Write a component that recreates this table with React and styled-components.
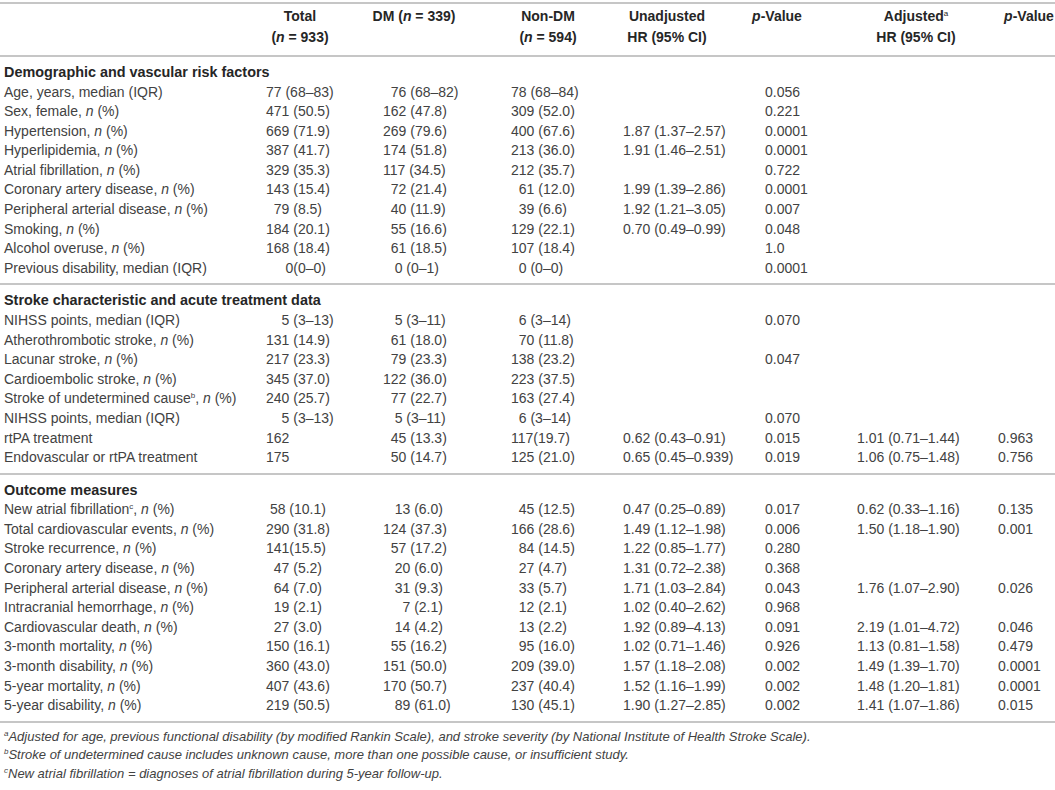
import React from "react";
import styled, { createGlobalStyle } from "styled-components";

const GlobalStyle = createGlobalStyle`
  html, body {
    margin: 0;
    padding: 0;
    background: #fff;
    overflow: hidden;
  }
  body {
    font-family: "Liberation Sans", Arial, sans-serif;
    color: #424242;
  }
`;

const F = "\u2007";
const H = "\u2008";

const columns = [
  { width: 258, pad: 4, shift: 0 },
  { width: 84, pad: 8, shift: 0 },
  { width: 144, pad: 41, shift: 0 },
  { width: 124, pad: 25, shift: 0 },
  { width: 114, pad: 13, shift: 0 },
  { width: 106, pad: 41, shift: 0 },
  { width: 160, pad: 27, shift: 12 },
  { width: 65, pad: 8, shift: 13 },
];

const Page = styled.div`
  width: 1055px;
  padding-top: 2px;
`;

const Table = styled.table`
  width: 1055px;
  table-layout: fixed;
  border-collapse: collapse;
  border-top: 2px solid #c6c6c6;
  border-bottom: 2px solid #c6c6c6;
  font-size: 14px;
`;

const Head = styled.thead`
  border-bottom: 2px solid #c6c6c6;
`;

const HeadCell = styled.th`
  vertical-align: top;
  text-align: center;
  font-weight: bold;
  color: #262626;
  line-height: 21px;
  padding: 2px 0 7px ${(p) => p.$shift}px;
  white-space: nowrap;
`;

const Section = styled.tbody`
  & + & {
    border-top: 2px solid #c6c6c6;
  }
  tr:last-child td {
    padding-bottom: 5px;
  }
`;

const TitleCell = styled.td`
  font-weight: bold;
  font-size: 14.4px;
  color: #262626;
  line-height: 19.5px;
  padding: 6px 0 0 4px;
  white-space: nowrap;
`;

const Cell = styled.td`
  line-height: 19.6px;
  padding: 0 0 0 ${(p) => p.$pad}px;
  white-space: pre;
  overflow: visible;
`;

const Sup = styled.sup`
  font-size: 8px;
  line-height: 0;
  vertical-align: 5px;
  font-weight: normal;
`;

const Notes = styled.div`
  padding: 5px 0 0 4px;
  font-style: italic;
  font-size: 13px;
  line-height: 18.5px;
  color: #424242;
`;

const Note = styled.div`
  white-space: nowrap;
`;

const N = () => <i>n</i>;
const np = (label) => (
  <>
    {label}, <N /> (%)
  </>
);

const sections = [
  {
    title: "Demographic and vascular risk factors",
    rows: [
      ["Age, years, median (IQR)", "77 (68–83)", F + "76 (68–82)", "78 (68–84)", "", "0.056", "", ""],
      [np("Sex, female"), "471 (50.5)", "162 (47.8)", "309 (52.0)", "", "0.221", "", ""],
      [np("Hypertension"), "669 (71.9)", "269 (79.6)", "400 (67.6)", "1.87 (1.37–2.57)", "0.0001", "", ""],
      [np("Hyperlipidemia"), "387 (41.7)", "174 (51.8)", "213 (36.0)", "1.91 (1.46–2.51)", "0.0001", "", ""],
      [np("Atrial fibrillation"), "329 (35.3)", "117 (34.5)", "212 (35.7)", "", "0.722", "", ""],
      [np("Coronary artery disease"), "143 (15.4)", F + "72 (21.4)", F + "61 (12.0)", "1.99 (1.39–2.86)", "0.0001", "", ""],
      [np("Peripheral arterial disease"), F + "79 (8.5)", F + "40 (11.9)", F + "39 (6.6)", "1.92 (1.21–3.05)", "0.007", "", ""],
      [np("Smoking"), "184 (20.1)", F + "55 (16.6)", "129 (22.1)", "0.70 (0.49–0.99)", "0.048", "", ""],
      [np("Alcohol overuse"), "168 (18.4)", F + "61 (18.5)", "107 (18.4)", "", "1.0", "", ""],
      ["Previous disability, median (IQR)", F + F + H + "0(0–0)", F + H + "0 (0–1)", F + "0 (0–0)", "", "0.0001", "", ""],
    ],
  },
  {
    title: "Stroke characteristic and acute treatment data",
    rows: [
      ["NIHSS points, median (IQR)", F + F + "5 (3–13)", F + H + "5 (3–11)", F + "6 (3–14)", "", "0.070", "", ""],
      [np("Atherothrombotic stroke"), "131 (14.9)", F + "61 (18.0)", F + "70 (11.8)", "", "", "", ""],
      [np("Lacunar stroke"), "217 (23.3)", F + "79 (23.3)", "138 (23.2)", "", "0.047", "", ""],
      [np("Cardioembolic stroke"), "345 (37.0)", "122 (36.0)", "223 (37.5)", "", "", "", ""],
      [
        <>
          Stroke of undetermined cause<Sup>b</Sup>, <N /> (%)
        </>,
        "240 (25.7)",
        F + "77 (22.7)",
        "163 (27.4)",
        "",
        "",
        "",
        "",
      ],
      ["NIHSS points, median (IQR)", F + F + "5 (3–13)", F + H + "5 (3–11)", F + "6 (3–14)", "", "0.070", "", ""],
      ["rtPA treatment", "162", F + "45 (13.3)", "117(19.7)", "0.62 (0.43–0.91)", "0.015", "1.01 (0.71–1.44)", "0.963"],
      ["Endovascular or rtPA treatment", "175", F + "50 (14.7)", "125 (21.0)", "0.65 (0.45–0.939)", "0.019", "1.06 (0.75–1.48)", "0.756"],
    ],
  },
  {
    title: "Outcome measures",
    rows: [
      [
        <>
          New atrial fibrillation<Sup>c</Sup>, <N /> (%)
        </>,
        H + "58 (10.1)",
        F + H + "13 (6.0)",
        F + "45 (12.5)",
        "0.47 (0.25–0.89)",
        "0.017",
        "0.62 (0.33–1.16)",
        "0.135",
      ],
      [np("Total cardiovascular events"), "290 (31.8)", "124 (37.3)", "166 (28.6)", "1.49 (1.12–1.98)", "0.006", "1.50 (1.18–1.90)", "0.001"],
      [np("Stroke recurrence"), "141(15.5)", F + "57 (17.2)", F + "84 (14.5)", "1.22 (0.85–1.77)", "0.280", "", ""],
      [np("Coronary artery disease"), F + "47 (5.2)", F + H + "20 (6.0)", F + "27 (4.7)", "1.31 (0.72–2.38)", "0.368", "", ""],
      [np("Peripheral arterial disease"), F + "64 (7.0)", F + H + "31 (9.3)", F + "33 (5.7)", "1.71 (1.03–2.84)", "0.043", "1.76 (1.07–2.90)", "0.026"],
      [np("Intracranial hemorrhage"), F + "19 (2.1)", F + F + H + "7 (2.1)", F + "12 (2.1)", "1.02 (0.40–2.62)", "0.968", "", ""],
      [np("Cardiovascular death"), F + "27 (3.0)", F + H + "14 (4.2)", F + "13 (2.2)", "1.92 (0.89–4.13)", "0.091", "2.19 (1.01–4.72)", "0.046"],
      [np("3-month mortality"), "150 (16.1)", F + "55 (16.2)", F + "95 (16.0)", "1.02 (0.71–1.46)", "0.926", "1.13 (0.81–1.58)", "0.479"],
      [np("3-month disability"), "360 (43.0)", "151 (50.0)", "209 (39.0)", "1.57 (1.18–2.08)", "0.002", "1.49 (1.39–1.70)", "0.0001"],
      [np("5-year mortality"), "407 (43.6)", "170 (50.7)", "237 (40.4)", "1.52 (1.16–1.99)", "0.002", "1.48 (1.20–1.81)", "0.0001"],
      [np("5-year disability"), "219 (50.5)", F + H + "89 (61.0)", "130 (45.1)", "1.90 (1.27–2.85)", "0.002", "1.41 (1.07–1.86)", "0.015"],
    ],
  },
];

const headers = [
  null,
  <>
    Total
    <br />(<N /> = 933)
  </>,
  <>
    DM (<N /> = 339)
  </>,
  <>
    Non-DM
    <br />(<N /> = 594)
  </>,
  <>
    Unadjusted
    <br />
    HR (95% CI)
  </>,
  <>
    <i>p</i>-Value
  </>,
  <>
    Adjusted<Sup>a</Sup>
    <br />
    HR (95% CI)
  </>,
  <>
    <i>p</i>-Value
  </>,
];

export default function App() {
  return (
    <Page>
      <GlobalStyle />
      <Table>
        <colgroup>
          {columns.map((c, i) => (
            <col key={i} style={{ width: c.width }} />
          ))}
        </colgroup>
        <Head>
          <tr>
            {headers.map((h, i) => (
              <HeadCell key={i} $shift={columns[i].shift}>
                {h}
              </HeadCell>
            ))}
          </tr>
        </Head>
        {sections.map((s) => (
          <Section key={s.title}>
            <tr>
              <TitleCell colSpan={8}>{s.title}</TitleCell>
            </tr>
            {s.rows.map((r, ri) => (
              <tr key={ri}>
                {r.map((v, ci) => (
                  <Cell key={ci} $pad={columns[ci].pad}>
                    {v}
                  </Cell>
                ))}
              </tr>
            ))}
          </Section>
        ))}
      </Table>
      <Notes>
        <Note>
          <Sup>a</Sup>Adjusted for age, previous functional disability (by modified Rankin Scale), and stroke severity (by
          National Institute of Health Stroke Scale).
        </Note>
        <Note>
          <Sup>b</Sup>Stroke of undetermined cause includes unknown cause, more than one possible cause, or insufficient
          study.
        </Note>
        <Note>
          <Sup>c</Sup>New atrial fibrillation = diagnoses of atrial fibrillation during 5-year follow-up.
        </Note>
      </Notes>
    </Page>
  );
}
